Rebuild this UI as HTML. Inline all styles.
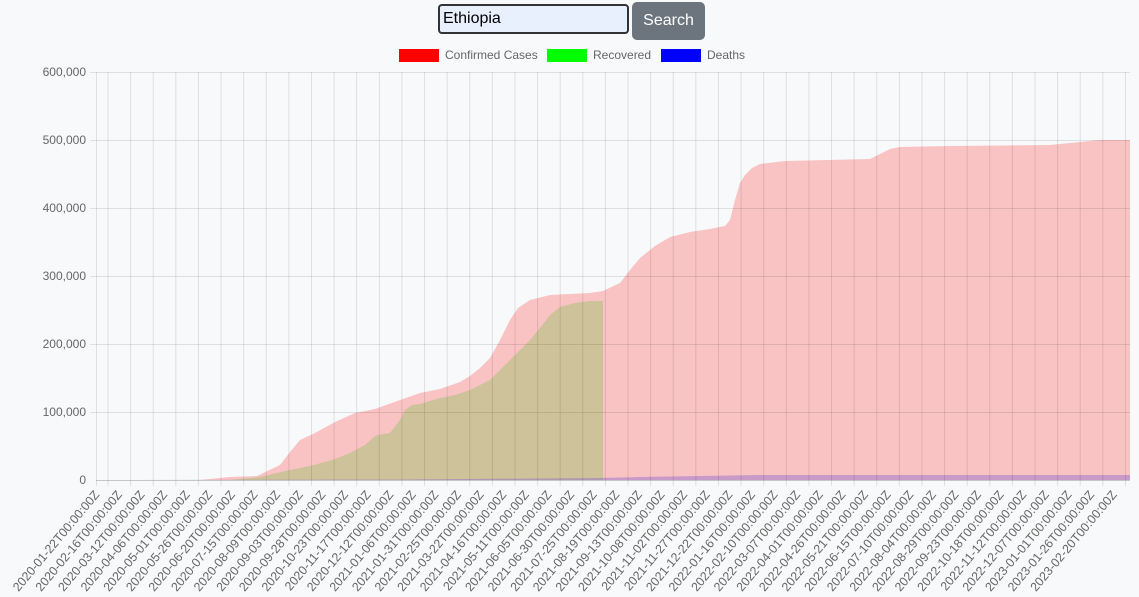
<!DOCTYPE html>
<html><head><meta charset="utf-8"><style>
body{margin:0;background:#f8f9fa;width:1139px;height:597px;overflow:hidden;font-family:"Liberation Sans",Arial,sans-serif}
#inp{position:absolute;left:438px;top:4px;height:26px;border:2px solid #333;border-radius:4px;background:#e8f0fe;font-size:16px;line-height:26px;padding-left:3px;width:184px;color:#000}
#btn{position:absolute;left:632px;top:2px;width:73px;height:38px;background:#6c757d;border-radius:5px;color:#fff;font-size:16px;line-height:38px;text-align:center}
</style></head><body>
<div id="inp">Ethiopia</div>
<div id="btn">Search</div>
<svg width="1139" height="597" style="position:absolute;left:0;top:0" font-family="Liberation Sans, Arial, sans-serif">
<g font-size="12" fill="#666">
<rect x="399" y="49" width="40" height="13" fill="#f00"/><text x="445" y="59">Confirmed Cases</text>
<rect x="547" y="49" width="40" height="13" fill="#0f0"/><text x="593" y="59">Recovered</text>
<rect x="661" y="49" width="40" height="13" fill="#00f"/><text x="707" y="59">Deaths</text>
</g>
<g font-size="12" fill="#666" text-anchor="end">
<text x="86" y="76">600,000</text><text x="86" y="144">500,000</text><text x="86" y="212">400,000</text><text x="86" y="280">300,000</text><text x="86" y="348">200,000</text><text x="86" y="416">100,000</text><text x="86" y="484">0</text>
</g>
<path fill="#f00" fill-opacity="0.22" d="M96,480 L200,480 L230,477 L257,476 L280,465 L290,452 L300,440 L315,433 L335,422 L355,413 L375,409 L400,400 L420,393 L440,389 L460,382 L470,376 L480,368 L490,358 L500,340 L510,320 L518,308 L530,300 L550,295 L570,294 L590,293 L603,291 L620,283 L630,270 L640,258 L655,246 L670,237 L690,232 L710,229 L725,226 L730,220 L735,200 L740,183 L745,175 L752,168 L760,164 L785,161 L870,159 L880,154 L890,149 L900,147 L950,146 L1050,145 L1080,142 L1100,140 L1130,140 L1130,480 Z"/>
<path fill="#cdc29a" d="M96,480 L230,480 L260,477 L290,470 L310,466 L325,462 L335,459 L350,453 L365,445 L375,436 L378,435 L390,433 L400,420 L405,410 L412,405 L420,404 L440,398 L455,395 L470,390 L490,380 L500,370 L510,360 L520,350 L530,340 L540,328 L550,315 L560,307 L575,303 L590,301 L603,301 L603,480 Z"/>
<path fill="#8060d0" fill-opacity="0.4" d="M96,480 L400,479.5 L600,478 L640,477 L700,476 L760,475 L1130,475 L1130,480 Z"/>
<g stroke="#000" stroke-opacity="0.1" stroke-width="1">
<line x1="90" x2="1130" y1="72.5" y2="72.5"/><line x1="90" x2="1130" y1="140.5" y2="140.5"/><line x1="90" x2="1130" y1="208.5" y2="208.5"/><line x1="90" x2="1130" y1="276.5" y2="276.5"/><line x1="90" x2="1130" y1="344.5" y2="344.5"/><line x1="90" x2="1130" y1="412.5" y2="412.5"/>
<line x1="96.5" x2="96.5" y1="72" y2="486"/>
<g id="vl"></g>
</g>
<line x1="96" x2="1130" y1="480.5" y2="480.5" stroke="#000" stroke-opacity="0.2"/>
<g id="xl" font-size="12.4" fill="#666" text-anchor="end"></g>
</svg>
<script>
var d=["2020-01-22","2020-02-16","2020-03-12","2020-04-06","2020-05-01","2020-05-26","2020-06-20","2020-07-15","2020-08-09","2020-09-03","2020-09-28","2020-10-23","2020-11-17","2020-12-12","2021-01-06","2021-01-31","2021-02-25","2021-03-22","2021-04-16","2021-05-11","2021-06-05","2021-06-30","2021-07-25","2021-08-19","2021-09-13","2021-10-08","2021-11-02","2021-11-27","2021-12-22","2022-01-16","2022-02-10","2022-03-07","2022-04-01","2022-04-26","2022-05-21","2022-06-15","2022-07-10","2022-08-04","2022-08-29","2022-09-23","2022-10-18","2022-11-12","2022-12-07","2023-01-01","2023-01-26","2023-02-20"];
var ns="http://www.w3.org/2000/svg",xl=document.getElementById("xl"),vl=document.getElementById("vl");
d.forEach(function(s,i){var x=108+22.61*i;
var l=document.createElementNS(ns,"line");l.setAttribute("x1",x);l.setAttribute("x2",x);l.setAttribute("y1",72);l.setAttribute("y2",486);vl.appendChild(l);
var t=document.createElementNS(ns,"text");t.setAttribute("transform","translate("+(x-8)+",495) rotate(-50)");t.textContent=s+"T00:00:00Z";xl.appendChild(t);});
</script>
</body></html>
